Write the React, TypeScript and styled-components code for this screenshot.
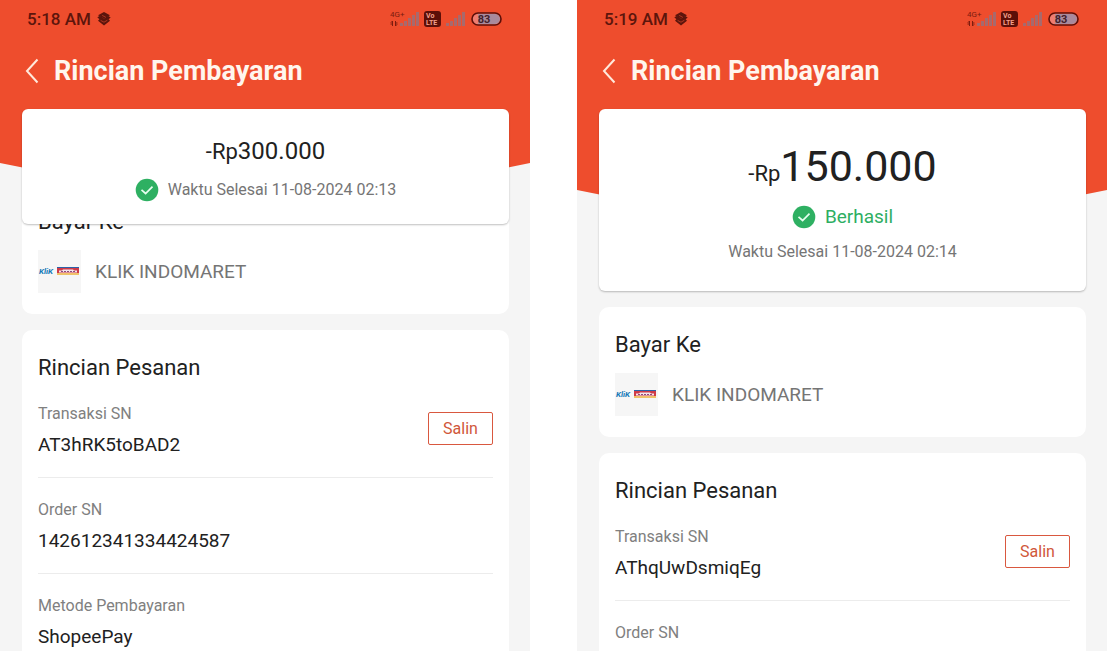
import React from "react";
import styled, { createGlobalStyle } from "styled-components";

const GlobalStyle = createGlobalStyle`
  *, *::before, *::after { box-sizing: border-box; }
  body {
    margin: 0;
    background: #ffffff;
    font-family: Roboto, "Liberation Sans", sans-serif;
    color: #212121;
  }
  h1, h2, p, dl, dt, dd { margin: 0; font-weight: 400; }
`;

const Page = styled.div`
  display: grid;
  grid-template-columns: 1fr 1fr;
  column-gap: 47px;
  height: 100vh;
  overflow: hidden;
`;

const Phone = styled.main`
  display: grid;
  grid-template-columns: minmax(0, 1fr);
  align-items: start;
  background: #f5f5f5;
  overflow: hidden;
`;

const Backdrop = styled.div<{ $height: number }>`
  grid-area: 1 / 1;
  height: ${(p) => p.$height}px;
  background: #ee4d2d;
  clip-path: polygon(0 0, 100% 0, 100% calc(100% - 53px), 50% 100%, 0 calc(100% - 53px));
`;

const Screen = styled.div`
  grid-area: 1 / 1;
  display: flex;
  flex-direction: column;
  position: relative;
`;

const StatusBar = styled.div`
  display: flex;
  align-items: center;
  justify-content: space-between;
  height: 38px;
  padding: 0 28px 0 27px;
  color: #5c150c;
`;

const Clock = styled.div`
  display: flex;
  align-items: center;
  gap: 6px;
  font-size: 17px;
  line-height: 20px;
  font-weight: 500;
`;

const StatusIcons = styled.div`
  display: flex;
  align-items: center;
  gap: 5px;
`;

const AppBar = styled.header`
  display: flex;
  align-items: center;
  gap: 14px;
  height: 66px;
  padding-left: 24px;
  margin-bottom: 5px;
`;

const BackButton = styled.button`
  display: flex;
  padding: 0;
  border: 0;
  background: none;
  color: #ffe9dc;
`;

const Title = styled.h1`
  font-size: 27px;
  line-height: 32px;
  font-weight: 700;
  color: #fff6ee;
`;

const Summary = styled.section<{ $compact: boolean }>`
  display: flex;
  flex-direction: column;
  align-items: center;
  position: relative;
  z-index: 1;
  gap: ${(p) => (p.$compact ? 11 : 9)}px;
  margin: 0 21px 0 22px;
  padding: ${(p) => (p.$compact ? "26px 16px 22px" : "29px 16px 27px")};
  border-radius: 6px;
  background: #ffffff;
  box-shadow: 0 1px 2px rgba(0, 0, 0, 0.25);
`;

const Amount = styled.p<{ $compact: boolean }>`
  font-size: ${(p) => (p.$compact ? 24 : 43)}px;
  line-height: ${(p) => (p.$compact ? 32 : 56)}px;
`;

const Currency = styled.span`
  font-size: 22px;
  line-height: 22px;
`;

const StatusLine = styled.div`
  display: flex;
  align-items: center;
  gap: 9px;
`;

const StatusText = styled.p`
  font-size: 19px;
  line-height: 28px;
  color: #2eae62;
`;

const DateText = styled.p`
  font-size: 16px;
  line-height: 24px;
  color: #757575;
`;

const Sections = styled.div<{ $scrolled: boolean }>`
  display: flex;
  flex-direction: column;
  gap: 16px;
  margin: ${(p) => (p.$scrolled ? "-40px" : "16px")} 21px 0 22px;
`;

const Card = styled.section`
  padding: 24px 16px 21px;
  border-radius: 10px;
  background: #ffffff;
`;

const CardTitle = styled.h2`
  font-size: 22px;
  line-height: 28px;
`;

const Merchant = styled.div`
  display: flex;
  align-items: center;
  gap: 14px;
  margin-top: 14px;
`;

const MerchantName = styled.p`
  font-size: 19px;
  line-height: 28px;
  color: #757575;
`;

const Fields = styled.dl`
  display: flex;
  flex-direction: column;
`;

const Field = styled.div`
  display: flex;
  align-items: flex-start;
  justify-content: space-between;
  padding: 20px 0 18px;
  border-bottom: 1px solid #ececec;
`;

const FieldText = styled.div`
  display: flex;
  flex-direction: column;
  gap: 5px;
`;

const Label = styled.dt`
  font-size: 16px;
  line-height: 24px;
  color: #808080;
`;

const Value = styled.dd`
  font-size: 19px;
  line-height: 28px;
`;

const CopyButton = styled.button`
  width: 65px;
  height: 33px;
  margin-top: 10px;
  padding: 0;
  border: 1px solid #d9583f;
  border-radius: 2px;
  background: #ffffff;
  color: #d0573a;
  font-family: inherit;
  font-size: 16px;
  line-height: 24px;
`;

function StackIcon() {
  return (
    <svg width="14" height="14" viewBox="0 0 14 14" aria-hidden="true">
      <path d="M7 0 13 3.2 7 6.6 1 3.2Z" fill="currentColor" />
      <path d="M0.3 5.2 3 3.8 7 6.4 11 3.8 13.7 5.4 11.6 7.2 13 8.8 7 13.6 1 8.8 2.4 7.2Z" fill="currentColor" />
      <path d="M5.2 3.4 8.8 5.3M3.6 8.4 7 10.2 10.4 8.2" stroke="#b53a22" strokeWidth="0.9" fill="none" />
    </svg>
  );
}

function SignalBars() {
  return (
    <>
      <rect x="0" y="11" width="3" height="3" />
      <rect x="4" y="9" width="3" height="5" />
      <rect x="8" y="6" width="3" height="8" />
      <rect x="12" y="3" width="3" height="11" />
      <rect x="16" y="0" width="3" height="14" />
    </>
  );
}

function MobileIcon() {
  return (
    <svg width="29" height="18" viewBox="0 0 29 18" aria-hidden="true">
      <text x="0" y="7" fontSize="8" fontFamily="Roboto, sans-serif" fill="#7d1c0f">4G+</text>
      <path d="M2.5 16V11M0.8 12.8 2.5 11 M5.5 11V16M7.2 14.2 5.5 16M0.5 14H3M5 13H7.5" stroke="#7d1c0f" strokeWidth="1" fill="none" />
      <g transform="translate(10 2)" fill="#a8696c"><SignalBars /></g>
    </svg>
  );
}

function VolteIcon() {
  return (
    <svg width="17" height="16" viewBox="0 0 17 16" aria-hidden="true">
      <rect width="17" height="16" rx="3" fill="#5c0f08" />
      <text x="2" y="7" fontSize="7" fontWeight="700" fontFamily="Roboto, sans-serif" fill="#f3a08c">Vo</text>
      <text x="2" y="14" fontSize="7" fontWeight="700" fontFamily="Roboto, sans-serif" fill="#f3a08c">LTE</text>
    </svg>
  );
}

function SecondSignalIcon() {
  return (
    <svg width="20" height="14" viewBox="0 0 20 14" aria-hidden="true">
      <g fill="#a8696c"><SignalBars /></g>
    </svg>
  );
}

function BatteryIcon() {
  return (
    <svg width="31" height="14" viewBox="0 0 31 14" aria-label="83%">
      <rect x="1" y="1" width="29" height="12" rx="6" fill="#ee7d70" />
      <path d="M7 2H24A5 5 0 0 1 24 12H7Z" fill="#a98a9c" />
      <rect x="1" y="1" width="29" height="12" rx="6" fill="none" stroke="#5c0f08" strokeWidth="1.6" />
      <text x="13" y="11" fontSize="11" fontWeight="700" textAnchor="middle" fontFamily="Roboto, sans-serif" fill="#42202a">83</text>
    </svg>
  );
}

function BackIcon() {
  return (
    <svg width="16" height="26" viewBox="0 0 16 26" aria-hidden="true">
      <path d="M13.5 1.5 3 13 13.5 24.5" fill="none" stroke="currentColor" strokeWidth="2" />
    </svg>
  );
}

function CheckIcon() {
  return (
    <svg width="24" height="24" viewBox="0 0 24 24" aria-hidden="true">
      <circle cx="12" cy="12" r="11.3" fill="#2eb062" />
      <path d="M6.5 11.8 10.6 15.5 17.5 8.6" fill="none" stroke="#e6fff0" strokeWidth="1.7" />
    </svg>
  );
}

function MerchantLogo() {
  return (
    <svg width="43" height="43" viewBox="0 0 43 43" aria-hidden="true">
      <rect width="43" height="43" fill="#f6f6f6" />
      <text x="1" y="24" fontSize="8" fontWeight="700" fontStyle="italic" fontFamily="Roboto, sans-serif" fill="#1479b8">KliK</text>
      <rect x="19" y="17" width="22" height="2" fill="#2b62a8" />
      <rect x="19" y="18" width="22" height="5" fill="#cf3b48" />
      <rect x="19" y="23" width="22" height="2" fill="#f0c26a" />
      <path d="M21 22.5V20.5H24L25 19.5H35L36 20.5H39V22.5Z" fill="#f4e3ea" />
      <path d="M23 21.5H37" stroke="#8c4c7c" strokeWidth="1" strokeDasharray="2 1" />
    </svg>
  );
}

type FieldData = { label: string; value: string; copy?: boolean };

type Receipt = {
  time: string;
  amount: string;
  finished: string;
  scrolled: boolean;
  fields: FieldData[];
};

const receipts: Receipt[] = [
  {
    time: "5:18 AM",
    amount: "300.000",
    finished: "Waktu Selesai 11-08-2024 02:13",
    scrolled: true,
    fields: [
      { label: "Transaksi SN", value: "AT3hRK5toBAD2", copy: true },
      { label: "Order SN", value: "142612341334424587" },
      { label: "Metode Pembayaran", value: "ShopeePay" },
    ],
  },
  {
    time: "5:19 AM",
    amount: "150.000",
    finished: "Waktu Selesai 11-08-2024 02:14",
    scrolled: false,
    fields: [
      { label: "Transaksi SN", value: "AThqUwDsmiqEg", copy: true },
      { label: "Order SN", value: "" },
    ],
  },
];

function ReceiptScreen({ time, amount, finished, scrolled, fields }: Receipt) {
  return (
    <Phone>
      <Backdrop $height={scrolled ? 216 : 243} />
      <Screen>
        <StatusBar>
          <Clock>
            {time}
            <StackIcon />
          </Clock>
          <StatusIcons>
            <MobileIcon />
            <VolteIcon />
            <SecondSignalIcon />
            <BatteryIcon />
          </StatusIcons>
        </StatusBar>
        <AppBar>
          <BackButton type="button" aria-label="Kembali">
            <BackIcon />
          </BackButton>
          <Title>Rincian Pembayaran</Title>
        </AppBar>
        <Summary $compact={scrolled}>
          <Amount $compact={scrolled}>
            <Currency>-Rp</Currency>
            {amount}
          </Amount>
          {scrolled ? (
            <StatusLine>
              <CheckIcon />
              <DateText>{finished}</DateText>
            </StatusLine>
          ) : (
            <>
              <StatusLine>
                <CheckIcon />
                <StatusText>Berhasil</StatusText>
              </StatusLine>
              <DateText>{finished}</DateText>
            </>
          )}
        </Summary>
        <Sections $scrolled={scrolled}>
          <Card>
            <CardTitle>Bayar Ke</CardTitle>
            <Merchant>
              <MerchantLogo />
              <MerchantName>KLIK INDOMARET</MerchantName>
            </Merchant>
          </Card>
          <Card>
            <CardTitle>Rincian Pesanan</CardTitle>
            <Fields>
              {fields.map((field) => (
                <Field key={field.label}>
                  <FieldText>
                    <Label>{field.label}</Label>
                    <Value>{field.value}</Value>
                  </FieldText>
                  {field.copy && <CopyButton type="button">Salin</CopyButton>}
                </Field>
              ))}
            </Fields>
          </Card>
        </Sections>
      </Screen>
    </Phone>
  );
}

export default function App() {
  return (
    <>
      <GlobalStyle />
      <Page>
        {receipts.map((receipt) => (
          <ReceiptScreen key={receipt.time} {...receipt} />
        ))}
      </Page>
    </>
  );
}
